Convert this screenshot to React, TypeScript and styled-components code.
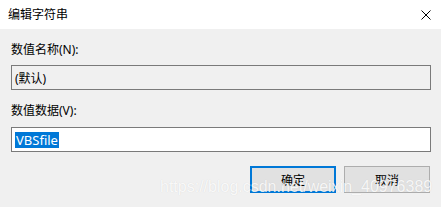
import React from "react";
import styled, { createGlobalStyle } from "styled-components";

const GlobalStyle = createGlobalStyle`
  html, body {
    margin: 0;
    padding: 0;
    background: #f0f0f0;
  }
  body {
    font-family: "Noto Sans", "Noto Sans CJK SC", sans-serif;
    font-size: 12px;
    color: #000;
  }
`;

const Dialog = styled.div`
  position: relative;
  width: 441px;
  height: 207px;
  display: flex;
  flex-direction: column;
  background: #f0f0f0;
  overflow: hidden;
`;

const TitleBar = styled.div`
  height: 29px;
  background: #fff;
  display: flex;
  align-items: center;
  justify-content: space-between;
  padding: 0 10px 0 8px;
  flex-shrink: 0;
`;

const Title = styled.span`
  font-size: 12px;
  line-height: 16px;
  margin-top: 1px;
`;

const CloseButton = styled.button`
  border: none;
  background: transparent;
  padding: 0;
  width: 10px;
  height: 10px;
  display: flex;
  margin-top: 1px;
`;

const Body = styled.div`
  flex: 1;
  display: flex;
  flex-direction: column;
  padding: 0 10px 0 11px;
`;

const Label = styled.div<{ $top: number }>`
  margin-top: ${(p) => p.$top}px;
  line-height: 16px;
  height: 16px;
`;

const Field = styled.div<{ $readOnly?: boolean; $gap: number }>`
  margin-top: ${(p) => p.$gap}px;
  height: 25px;
  box-sizing: border-box;
  border: 1px solid #7a7a7a;
  background: ${(p) => (p.$readOnly ? "#f0f0f0" : "#fff")};
  display: flex;
  align-items: center;
  padding-left: 3px;
`;

const Selected = styled.span`
  background: #0078d7;
  color: #fff;
  line-height: 16px;
  padding: 0 1px;
  font-size: 13px;
`;

const Buttons = styled.div`
  margin-top: 14px;
  display: flex;
  justify-content: flex-end;
  gap: 8px;
  padding-right: 1px;
`;

const Button = styled.button<{ $primary?: boolean }>`
  width: 86px;
  height: 27px;
  box-sizing: border-box;
  background: #e1e1e1;
  border: ${(p) => (p.$primary ? "2px solid #0078d7" : "1px solid #adadad")};
  font-family: inherit;
  font-size: 12px;
  color: #000;
  padding: 0;
`;

const Watermark = styled.div`
  position: absolute;
  left: 160px;
  top: 177px;
  font-family: "Liberation Sans", Arial, sans-serif;
  font-size: 16px;
  line-height: 20px;
  color: rgba(255, 255, 255, 0.85);
  text-shadow: 0 0 1px rgba(0, 0, 0, 0.12);
  white-space: nowrap;
  pointer-events: none;
`;

export default function App() {
  return (
    <>
      <GlobalStyle />
      <Dialog>
        <TitleBar>
          <Title>编辑字符串</Title>
          <CloseButton aria-label="关闭">
            <svg width="10" height="10" viewBox="0 0 10 10">
              <path d="M0.5 0.5 L9.5 9.5 M9.5 0.5 L0.5 9.5" stroke="#000" strokeWidth="1" />
            </svg>
          </CloseButton>
        </TitleBar>
        <Body>
          <Label $top={13}>数值名称(N):</Label>
          <Field $readOnly $gap={7}>(默认)</Field>
          <Label $top={13}>数值数据(V):</Label>
          <Field $gap={8}>
            <Selected>VBSfile</Selected>
          </Field>
          <Buttons>
            <Button $primary>确定</Button>
            <Button>取消</Button>
          </Buttons>
        </Body>
        <Watermark>https://blog.csdn.net/weixin_40976389</Watermark>
      </Dialog>
    </>
  );
}
